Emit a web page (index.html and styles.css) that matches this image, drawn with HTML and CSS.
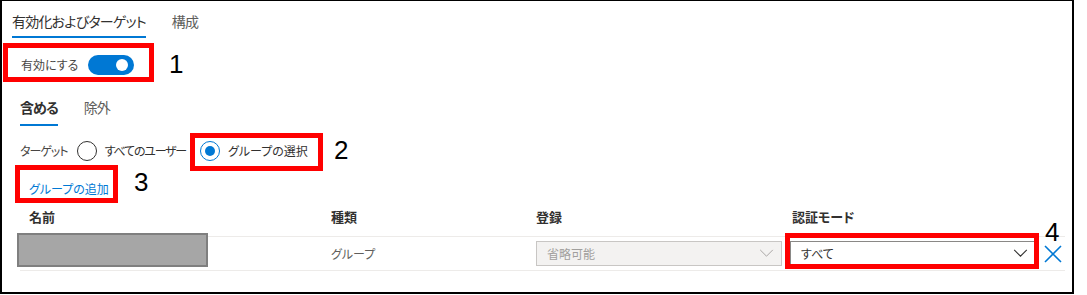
FILE: index.html
```html
<!DOCTYPE html>
<html lang="ja">
<head>
<meta charset="utf-8">
<link rel="stylesheet" href="styles.css">
</head>
<body>
<div class="frame">
  <div class="tabs">
    <div class="tab active">有効化およびターゲット</div>
    <div class="tab">構成</div>
  </div>
  <div class="enable-row">
    <span class="label">有効にする</span>
    <span class="toggle"><span class="knob"></span></span>
  </div>
  <div class="subtabs">
    <div class="subtab active">含める</div>
    <div class="subtab">除外</div>
  </div>
  <div class="target-row">
    <span class="label lead">ターゲット</span>
    <span class="radio"></span>
    <span class="label all">すべてのユーザー</span>
    <span class="radio checked"><span class="dot"></span></span>
    <span class="label">グループの選択</span>
  </div>
  <div class="link-row">
    <span class="link">グループの追加</span>
  </div>
  <div class="table">
    <div class="th th-name">名前</div>
    <div class="th">種類</div>
    <div class="th">登録</div>
    <div class="th th-auth">認証モード</div>
    <div class="th"></div>
    <div class="td"><div class="redact"></div></div>
    <div class="td td-type">グループ</div>
    <div class="td"><div class="select disabled"><span>省略可能</span><svg class="chev" viewBox="0 0 16 10" width="15" height="9"><path d="M1 1 L8 8 L15 1" fill="none" stroke="#a19f9d" stroke-width="1"/></svg></div></div>
    <div class="td td-auth"><div class="select"><span>すべて</span><svg class="chev" viewBox="0 0 16 10" width="15" height="9"><path d="M1 1 L8 8 L15 1" fill="none" stroke="#323130" stroke-width="1.2"/></svg></div></div>
    <div class="td td-del"><svg viewBox="0 0 18 18" width="18" height="18"><path d="M1 1 L17 17 M17 1 L1 17" stroke="#0078d4" stroke-width="1.6" fill="none"/></svg></div>
  </div>
</div>
<div class="annot box1"></div>
<div class="annot box2"></div>
<div class="annot box3"></div>
<div class="annot box4"></div>
<div class="num n1">1</div>
<div class="num n2">2</div>
<div class="num n3">3</div>
<div class="num n4">4</div>
</body>
</html>
```
FILE: styles.css
```css
html, body {
  margin: 0;
  padding: 0;
  background: #fff;
}
body {
  position: relative;
  width: 1087px;
  height: 295px;
  overflow: hidden;
  font-family: "Noto Sans CJK JP", "Noto Sans", sans-serif;
  font-feature-settings: "palt" 1;
  color: #323130;
}
.frame {
  box-sizing: border-box;
  width: 1074px;
  height: 294px;
  border: 2px solid #000;
  border-top-width: 1px;
}
.tabs {
  display: flex;
  gap: 26px;
  padding-left: 10px;
}
.tab {
  font-size: 14px;
  line-height: 20px;
  letter-spacing: -0.8px;
  padding-top: 10px;
  padding-bottom: 5px;
  border-bottom: 2px solid transparent;
  color: #605e5c;
}
.tab.active {
  color: #323130;
  border-bottom-color: #0078d4;
}
.enable-row {
  display: flex;
  align-items: center;
  height: 20px;
  margin-top: 17px;
  padding-left: 19px;
  gap: 10px;
}
.label {
  font-size: 12px;
  line-height: 20px;
  color: #323130;
}
.enable-row .label { color: #484644; }
.toggle {
  position: relative;
  display: inline-block;
  width: 46px;
  height: 20px;
  border-radius: 10px;
  background: #0078d4;
}
.knob {
  position: absolute;
  right: 6px;
  top: 4px;
  width: 12px;
  height: 12px;
  border-radius: 50%;
  background: #fff;
}
.subtabs {
  display: flex;
  gap: 26px;
  padding-left: 18px;
  margin-top: 22px;
}
.subtab {
  font-size: 14px;
  line-height: 20px;
  letter-spacing: -1px;
  padding-bottom: 7px;
  border-bottom: 2px solid transparent;
  color: #605e5c;
}
.subtab.active {
  color: #323130;
  font-weight: 600;
  border-bottom-color: #0078d4;
}
.target-row {
  display: flex;
  align-items: center;
  height: 20px;
  margin-top: 15px;
  padding-left: 18px;
}
.target-row .lead {
  margin-right: 9px;
  color: #484644;
  letter-spacing: -1px;
}
.target-row .all { letter-spacing: -1.2px; }
.radio {
  box-sizing: border-box;
  display: inline-flex;
  align-items: center;
  justify-content: center;
  width: 20px;
  height: 20px;
  border: 1px solid #323130;
  border-radius: 50%;
  margin-right: 8px;
}
.radio.checked {
  border-color: #0078d4;
  margin-left: 14px;
}
.dot {
  width: 10px;
  height: 10px;
  border-radius: 50%;
  background: #0078d4;
}
.link-row {
  height: 20px;
  margin-top: 14px;
  padding-left: 27px;
}
.link {
  font-size: 12px;
  line-height: 20px;
  color: #0078d4;
}
.table {
  display: grid;
  grid-template-columns: 311px 205px 254px 252px 23px;
  margin-top: 11px;
  margin-left: 18px;
}
.th {
  box-sizing: border-box;
  height: 31px;
  padding-top: 1px;
  font-size: 13px;
  line-height: 20px;
  font-weight: 600;
  color: #323130;
  border-bottom: 1px solid #edebe9;
}
.th-name { padding-left: 9px; }
.th-auth { padding-left: 2px; }
.td {
  box-sizing: border-box;
  height: 34px;
  border-bottom: 1px solid #edebe9;
  font-size: 12px;
  color: #605e5c;
}
.td-type {
  line-height: 32px;
  padding-top: 1px;
}
.redact {
  box-sizing: border-box;
  width: 191px;
  height: 34px;
  margin-top: -4px;
  margin-left: -3px;
  background: #a6a6a6;
  border: 2px solid #7f7f7f;
}
.select {
  box-sizing: border-box;
  display: flex;
  align-items: center;
  justify-content: space-between;
  width: 246px;
  height: 25px;
  margin-top: 4px;
  padding: 0 7px 0 10px;
  border: 1px solid #8a8886;
  background: #fff;
  font-size: 12px;
  color: #323130;
}
.select.disabled {
  background: #f3f2f1;
  border-color: #c8c6c4;
  color: #a19f9d;
}
.td-del {
  display: flex;
  align-items: center;
  padding-left: 2px;
}
.td-del svg { margin-top: 1px; }
.annot {
  position: absolute;
  box-sizing: border-box;
  border: 5px solid #ff0000;
}
.box1 { left: 3px; top: 43px; width: 151px; height: 39px; }
.box2 { left: 190px; top: 133px; width: 133px; height: 38px; }
.box3 { left: 15px; top: 165px; width: 103px; height: 38px; }
.box4 { left: 785px; top: 233px; width: 254px; height: 36px; }
.num {
  position: absolute;
  font-family: "Liberation Sans", Arial, sans-serif;
  font-size: 26px;
  line-height: 26px;
  color: #000;
}
.n1 { left: 169px; top: 51px; }
.n2 { left: 334px; top: 137px; }
.n3 { left: 134px; top: 169px; }
.n4 { left: 1045px; top: 219px; }
```
